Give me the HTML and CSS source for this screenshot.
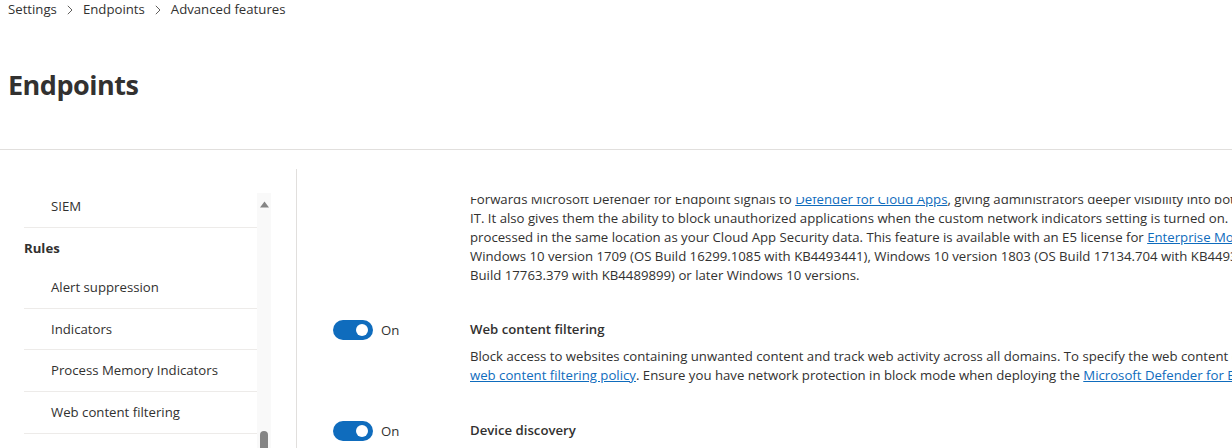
FILE: index.html
```html
<!DOCTYPE html>
<html lang="en">
<head>
<meta charset="utf-8">
<title>Endpoints - Advanced features</title>
<link rel="stylesheet" href="styles.css">
</head>
<body>
<div class="page">
  <header class="header">
    <nav class="breadcrumb">
      <span class="crumb">Settings</span>
      <span class="sep"><svg width="6" height="10" viewBox="0 0 6 10"><path d="M0.8 0.8L5 5L0.8 9.2" fill="none" stroke="#605e5c" stroke-width="1"/></svg></span>
      <span class="crumb">Endpoints</span>
      <span class="sep"><svg width="6" height="10" viewBox="0 0 6 10"><path d="M0.8 0.8L5 5L0.8 9.2" fill="none" stroke="#605e5c" stroke-width="1"/></svg></span>
      <span class="crumb">Advanced features</span>
    </nav>
    <h1 class="title">Endpoints</h1>
  </header>
  <div class="main">
    <aside class="nav-col">
      <div class="navbox">
        <ul class="navlist">
          <li class="nav-item">SIEM</li>
          <li class="nav-group">Rules</li>
          <li class="nav-item">Alert suppression</li>
          <li class="nav-item">Indicators</li>
          <li class="nav-item">Process Memory Indicators</li>
          <li class="nav-item">Web content filtering</li>
        </ul>
        <div class="scrollbar">
          <svg class="arrow" width="14" height="14" viewBox="0 0 14 14"><path d="M3 10.5L7.5 4.5L12 10.5Z" fill="#858585"/></svg>
          <div class="thumb"></div>
        </div>
      </div>
    </aside>
    <section class="content-col">
      <div class="scroll">
        <div class="settings">
          <div class="setting first">
            <div class="toggle-cell"></div>
            <div class="text-cell">
              <div class="desc">
                <span class="line">Forwards Microsoft Defender for Endpoint signals to <a href="#">Defender for Cloud Apps</a>, giving administrators deeper visibility into both sanctioned cloud apps and shadow</span>
                <span class="line">IT. It also gives them the ability to block unauthorized applications when the custom network indicators setting is turned on. Forwarded data is stored and</span>
                <span class="line">processed in the same location as your Cloud App Security data. This feature is available with an E5 license for <a href="#">Enterprise Mobility + Security</a> on devices running</span>
                <span class="line">Windows 10 version 1709 (OS Build 16299.1085 with KB4493441), Windows 10 version 1803 (OS Build 17134.704 with KB4493464), Windows 10 version 1809 (OS</span>
                <span class="line">Build 17763.379 with KB4489899) or later Windows 10 versions.</span>
              </div>
            </div>
          </div>
          <div class="setting">
            <div class="toggle-cell"><span class="toggle"><span class="knob"></span></span><span class="state">On</span></div>
            <div class="text-cell">
              <div class="setting-title">Web content filtering</div>
              <div class="desc">
                <span class="line">Block access to websites containing unwanted content and track web activity across all domains. To specify the web content categories you want to block, create a</span>
                <span class="line"><a href="#">web content filtering policy</a>. Ensure you have network protection in block mode when deploying the <a href="#">Microsoft Defender for Endpoint security baseline</a>.</span>
              </div>
            </div>
          </div>
          <div class="setting">
            <div class="toggle-cell"><span class="toggle"><span class="knob"></span></span><span class="state">On</span></div>
            <div class="text-cell">
              <div class="setting-title">Device discovery</div>
            </div>
          </div>
        </div>
      </div>
    </section>
  </div>
</div>
</body>
</html>
```
FILE: styles.css
```css
html, body {
  margin: 0;
  padding: 0;
  height: 100%;
  overflow: hidden;
  background: #ffffff;
}

body {
  font-family: "Open Sans", "Noto Sans", sans-serif;
  font-size: 13.2px;
  color: #323130;
}

.page {
  display: flex;
  flex-direction: column;
  height: 448px;
}

.header {
  flex: none;
  height: 149px;
  border-bottom: 1px solid #e1dfdd;
  box-sizing: content-box;
}

.breadcrumb {
  display: flex;
  align-items: center;
  height: 19px;
  line-height: 19px;
  padding-left: 8px;
  color: #323130;
}

.sep {
  display: flex;
  justify-content: center;
  align-items: center;
  width: 26px;
  height: 19px;
}

.title {
  margin: 48px 0 0 8px;
  font-size: 27px;
  font-weight: 700;
  line-height: 36px;
  letter-spacing: -0.5px;
  color: #323130;
}

.main {
  flex: 1;
  display: flex;
  min-height: 0;
}

.nav-col {
  flex: none;
  width: 296px;
  display: flex;
  flex-direction: column;
}

.navbox {
  margin: 43px 0 0 24px;
  flex: 1;
  min-height: 0;
  display: flex;
  overflow: hidden;
}

.navlist {
  list-style: none;
  margin: -6.67px 0 0 0;
  padding: 0;
  width: 233px;
  flex: none;
}

.nav-item {
  height: 40.67px;
  line-height: 40.67px;
  padding-left: 27px;
  border-bottom: 1px solid #edebe9;
  white-space: nowrap;
}

.nav-group {
  font-weight: 700;
  padding: 10px 0 9px 0;
  line-height: 20px;
}

.scrollbar {
  flex: none;
  width: 14px;
  background: #f9f9f9;
  display: flex;
  flex-direction: column;
  align-items: center;
}

.arrow {
  margin-top: 4px;
  flex: none;
}

.thumb {
  margin-top: auto;
  margin-bottom: -20px;
  width: 8px;
  height: 37px;
  border-radius: 4px;
  background: #858585;
}

.content-col {
  flex: 1;
  min-width: 0;
  margin-top: 19px;
  border-left: 1px solid #e1dfdd;
  display: flex;
  flex-direction: column;
  overflow: hidden;
}

.scroll {
  margin-top: 28px;
  flex: 1;
  min-height: 0;
  overflow: hidden;
}

.settings {
  margin-top: -7.4px;
  padding-left: 36px;
}

.setting {
  display: flex;
  margin-bottom: 35px;
}

.setting.first {
  margin-bottom: 34px;
}

.toggle-cell {
  flex: none;
  width: 137px;
  display: flex;
  align-items: center;
  gap: 8px;
  height: 20px;
  padding-top: 1px;
}

.toggle {
  position: relative;
  display: inline-block;
  width: 40px;
  height: 20px;
  border-radius: 10px;
  background: #0f6cbd;
}

.knob {
  position: absolute;
  right: 5px;
  top: 4px;
  width: 12px;
  height: 12px;
  border-radius: 50%;
  background: #ffffff;
}

.state {
  line-height: 20px;
}

.text-cell {
  flex: none;
  white-space: nowrap;
}

.setting-title {
  font-weight: 600;
  line-height: 20px;
  margin-bottom: 8px;
}

.desc .line {
  display: block;
  line-height: 19px;
}

.desc a {
  color: #0f6cbd;
  text-decoration: underline;
}
```
